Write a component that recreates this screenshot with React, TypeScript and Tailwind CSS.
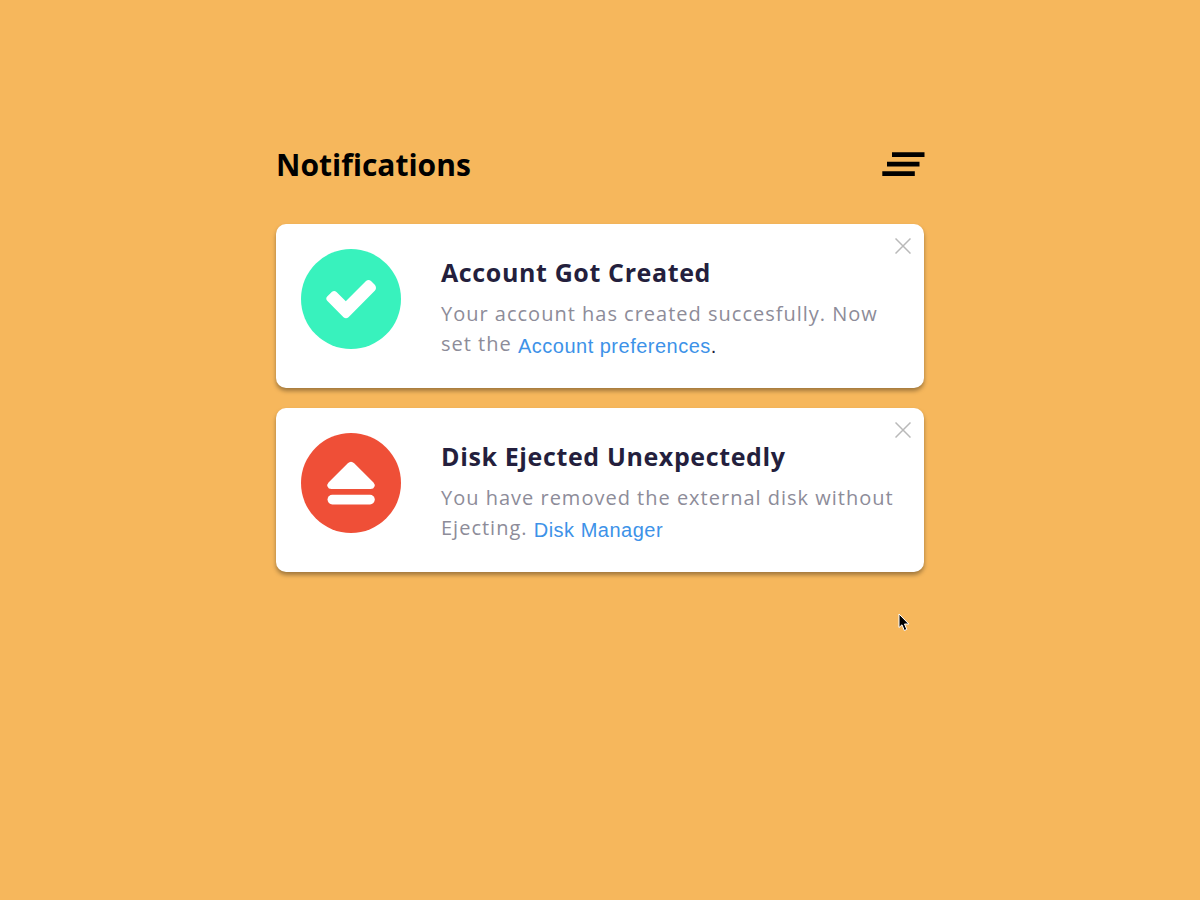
import { useState } from "react";
import type { ReactNode } from "react";

type Notification = {
  id: string;
  title: string;
  icon: ReactNode;
  iconBg: string;
  message: string;
  action: string;
  link: string;
  suffix?: string;
};

const CheckIcon = () => (
  <svg viewBox="0 0 100 100" className="size-full" fill="white" aria-hidden="true">
    <path d="M26.200 47.600 L31 42.800 Q33.200 41 35.500 43 L44.800 52.200 L65 32.100 Q67.500 30 70 32 L74 36 Q76 39 74 41.500 L47.500 68.200 Q45 70.500 42.500 68.200 L26.200 51.800 Q24.300 49.700 26.200 47.600Z" />
  </svg>
);

const EjectIcon = () => (
  <svg viewBox="0 0 100 100" className="size-full" fill="white" aria-hidden="true">
    <path d="M46.800 30.300 Q50 27.200 53.200 30.300 L72.500 49.500 Q74.200 51.500 73.500 53.500 Q72.700 56 69.500 56 H30.500 Q27.300 56 26.500 53.500 Q25.800 51.500 27.500 49.500Z" />
    <rect x="26.500" y="61.800" width="47.300" height="9.600" rx="4.800" />
  </svg>
);

const notifications: Notification[] = [
  {
    id: "account",
    title: "Account Got Created",
    icon: <CheckIcon />,
    iconBg: "bg-[#38f2bd]",
    message: "Your account has created succesfully. Now",
    action: "set the",
    link: "Account preferences",
    suffix: ".",
  },
  {
    id: "disk",
    title: "Disk Ejected Unexpectedly",
    icon: <EjectIcon />,
    iconBg: "bg-[#ef4f37]",
    message: "You have removed the external disk without",
    action: "Ejecting.",
    link: "Disk Manager",
  },
];

function NotificationCard({ item, onClose }: { item: Notification; onClose: () => void }) {
  return (
    <li className="relative flex gap-10 rounded-[10px] bg-white px-[25px] pt-[25px] pb-[29px] shadow-[0_3px_4px_rgba(0,0,0,0.35)]">
      <div className={`size-[100px] shrink-0 overflow-hidden rounded-full ${item.iconBg}`}>
        {item.icon}
      </div>
      <div className="min-w-0 flex-1 pt-2">
        <h2 className="text-[25px] leading-[30px] font-bold tracking-wide text-[#241f3d]">
          {item.title}
        </h2>
        <p className="mt-3 text-[20px] leading-[30px] tracking-wider text-[#8d8c99]">
          <span>{item.message}</span> <span>{item.action}</span>{" "}
          <span className="align-middle font-['Liberation_Sans',Arial,sans-serif] leading-6 tracking-wide text-[#241f3d]">
            <a href="#" className="text-[#3d92e8]">{item.link}</a>
            {item.suffix}
          </span>
        </p>
      </div>
      <button
        type="button"
        aria-label="Dismiss"
        onClick={onClose}
        className="absolute top-3 right-[11px] flex size-5 items-center justify-center text-[#b9b9b9]"
      >
        <svg viewBox="0 0 16 16" className="size-4" fill="none" stroke="currentColor" strokeWidth="1.500">
          <path d="M0.500 0.500 L15.500 15.500 M15.500 0.500 L0.500 15.500" />
        </svg>
      </button>
    </li>
  );
}

export default function App() {
  const [items, setItems] = useState(notifications);

  return (
    <div className="relative min-h-screen bg-[#f6b75c] px-4 pt-36 font-['Open_Sans',sans-serif]">
      <main className="mx-auto max-w-[648px]">
        <header className="mb-[38px] flex items-center justify-between">
          <h1 className="text-[30px] leading-[42px] font-bold text-black">Notifications</h1>
          <button type="button" aria-label="Menu">
            <svg viewBox="0 0 44 26" className="h-[26px] w-11 overflow-visible" fill="black">
              <path d="M12 0.300h32.500v4.700H12zM7 9.700h32.500v4.700H7zM2.300 19.200h32.500v4.700H2.300z" />
            </svg>
          </button>
        </header>
        <ul className="flex flex-col gap-5">
          {items.map((item) => (
            <NotificationCard
              key={item.id}
              item={item}
              onClose={() => setItems(items.filter((i) => i.id !== item.id))}
            />
          ))}
        </ul>
      </main>
      {/* mouse pointer */}
      <svg viewBox="0 0 12 19" className="pointer-events-none absolute top-[613px] left-[898px] h-[19px] w-3" aria-hidden="true">
        <path
          d="M1 1 V14.500 L4 11.800 L6.300 17.500 L8.800 16.400 L6.500 11 H10.800Z"
          fill="black"
          stroke="white"
          strokeWidth="1"
        />
      </svg>
    </div>
  );
}
